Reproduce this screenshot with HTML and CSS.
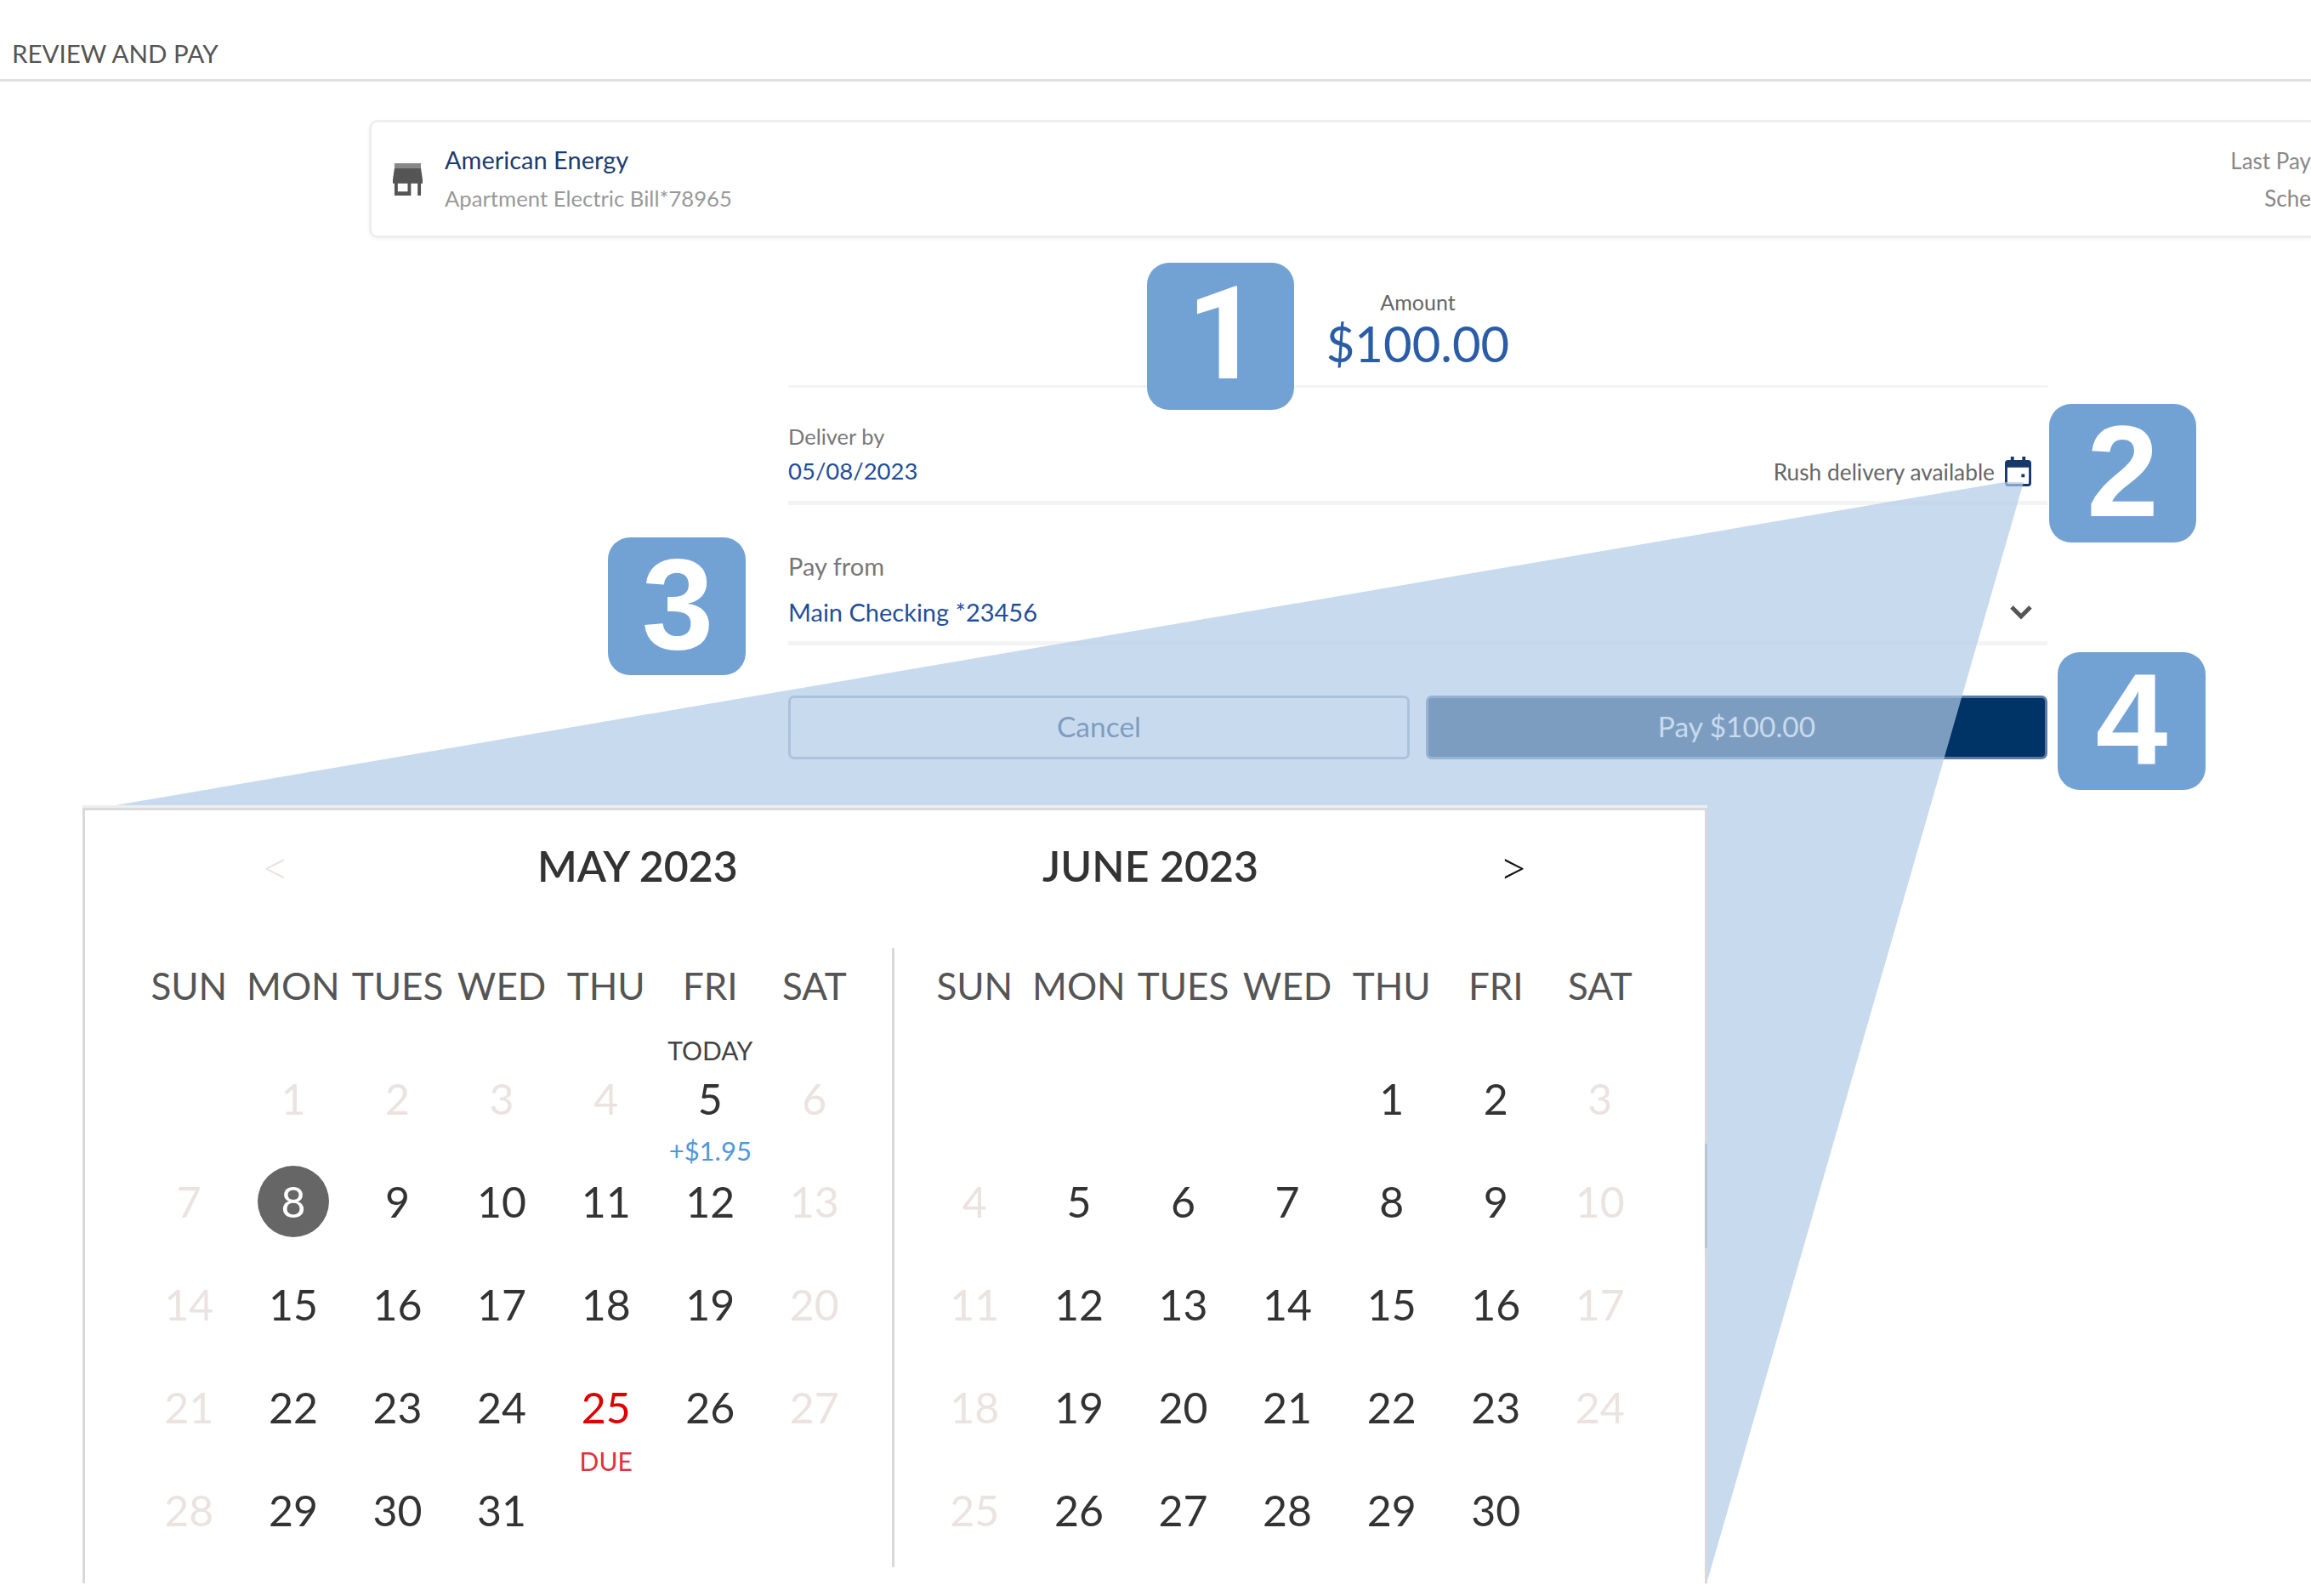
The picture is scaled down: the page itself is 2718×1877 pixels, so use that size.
FILE: index.html
```html
<!DOCTYPE html>
<html lang="en">
<head>
    <meta charset="UTF-8">
    <title>Review and Pay</title>
    <link rel="stylesheet" href="styles.css">
</head>
<body>
    <div class="page">
        <div class="page-header">REVIEW AND PAY</div>

        <div class="payee-card">
            <svg class="store-icon" viewBox="3 4 18 16" preserveAspectRatio="none">
                <path class="store-top" d="M20 4H4v2.5h16z"/>
                <path d="M21 14v-2l-1-5.500H4l-1 5.500v2h1v6h10v-6h4v6h2v-6zm-9 4H6v-4h6z"/>
            </svg>
            <div class="payee-info">
                <div class="payee-name">American Energy</div>
                <div class="payee-sub">Apartment Electric Bill*78965</div>
            </div>
            <div class="payee-last">
                <div>Last Pay</div>
                <div>Sche</div>
            </div>
        </div>

        <div class="form">
            <div class="amount">
                <div class="amount-label">Amount</div>
                <div class="amount-value">$100.00</div>
            </div>

            <div class="field field-date">
                <div>
                    <div class="field-label">Deliver by</div>
                    <div class="field-value">05/08/2023</div>
                </div>
                <div class="rush">
                    <span>Rush delivery available</span>
                    <svg class="cal-icon" viewBox="0 0 32 36"><path d="M7 0h4v4h10V0h4v4h3a4 4 0 0 1 4 4v24a4 4 0 0 1-4 4H4a4 4 0 0 1-4-4V8a4 4 0 0 1 4-4h3zM3 13v19a1 1 0 0 0 1 1h24a1 1 0 0 0 1-1V13zM20 21h4v4h-4z" fill-rule="evenodd"/></svg>
                </div>
            </div>

            <div class="field field-from">
                <div class="field-label">Pay from</div>
                <div class="field-row">
                    <div class="field-value">Main Checking *23456</div>
                    <svg class="chevron" viewBox="0 0 26 18"><path d="M2 3l11 11L24 3" fill="none" stroke="#555" stroke-width="5"/></svg>
                </div>
            </div>

            <div class="buttons">
                <button class="btn btn-cancel" type="button">Cancel</button>
                <button class="btn btn-pay" type="button">Pay $100.00</button>
            </div>
        </div>
    </div>

    <!-- callout wedge from the calendar icon down to the enlarged calendar -->
    <svg class="wedge" viewBox="0 0 2718 1877"><polygon points="2358,567 2380,567 2007,1863 136,947"/></svg>

    <div class="calendar">
        <div class="cal-titles">
            <span class="cal-arrow cal-arrow-off">&lt;</span>
            <span class="cal-title cal-title-may">MAY 2023</span>
            <span class="cal-title cal-title-june">JUNE 2023</span>
            <span class="cal-arrow cal-arrow-next">&gt;</span>
        </div>
        <div class="cal-months">
            <div class="month month-may" id="may"></div>
            <div class="month month-june" id="june"></div>
        </div>
    </div>

    <div class="badge badge-1">1</div>
    <div class="badge badge-2">2</div>
    <div class="badge badge-3">3</div>
    <div class="badge badge-4">4</div>

    <script src="calendar.js"></script>
</body>
</html>
```

FILE: styles.css
```css
* {
    margin: 0;
    padding: 0;
    box-sizing: border-box;
}

html, body {
    width: 2718px;
    height: 1877px;
    overflow: hidden;
    background: white;
}

body {
    position: relative;
    font-family: "Lato", sans-serif;
    color: #333;
}

.page-header {
    height: 96px;
    padding: 47px 0 0 14px;
    font-size: 29.500px;
    line-height: 32px;
    color: #555;
    border-bottom: 3px solid #e0e0e0;
}

.payee-card {
    display: flex;
    align-items: center;
    height: 139px;
    margin: 45px 0 0 434px;
    padding: 0 0 0 25px;
    border: 3px solid #eeeeee;
    border-right: none;
    border-radius: 10px 0 0 10px;
    box-shadow: 0 2px 4px rgba(0, 0, 0, 0.04);
}

.store-icon {
    width: 35px;
    height: 38px;
    fill: #555;
}

.store-top {
    fill: #888;
}

.payee-info {
    margin-left: 26px;
}

.payee-name {
    font-size: 29px;
    line-height: 34px;
    margin-top: -2px;
    color: #1d3c6e;
}

.payee-sub {
    margin-top: 13px;
    font-size: 25.700px;
    line-height: 30px;
    color: #999;
}

.payee-last {
    margin-left: auto;
    margin-top: 1px;
    text-align: right;
    font-size: 26px;
    line-height: 44px;
    color: #888;
    white-space: nowrap;
}

.form {
    width: 1481px;
    margin: 53px 0 0 927px;
}

.amount {
    height: 123px;
    padding-top: 8px;
    text-align: center;
    border-bottom: 3px solid #f3f3f3;
}

.amount-label {
    font-size: 25px;
    line-height: 28px;
    color: #666;
}

.amount-value {
    margin-top: 4px;
    font-size: 58px;
    line-height: 62px;
    color: #2a5ca8;
}

.field-label {
    font-size: 25.500px;
    line-height: 30px;
    color: #777;
}

.field-value {
    font-size: 27.500px;
    line-height: 36px;
    color: #1f4f9c;
}

.field-date {
    display: flex;
    justify-content: space-between;
    align-items: flex-end;
    height: 138px;
    padding: 40px 19px 17px 0;
    border-bottom: 5px solid #f3f3f3;
}

.field-date .field-label {
    margin-bottom: 8px;
}

.rush {
    display: flex;
    align-items: flex-end;
    gap: 12px;
    font-size: 26.300px;
    line-height: 30px;
    color: #666;
}

.rush span {
    margin-bottom: 2px;
}

.cal-icon {
    width: 31px;
    height: 35px;
    fill: #16386b;
}

.field-from {
    height: 165px;
    padding-top: 57px;
    border-bottom: 5px solid #f3f3f3;
}

.field-from .field-label {
    font-size: 29px;
}

.field-from .field-value {
    font-size: 29px;
}

.field-row {
    display: flex;
    justify-content: space-between;
    align-items: center;
    margin-top: 21px;
    padding-right: 18px;
}

.chevron {
    width: 26px;
    height: 18px;
}

.buttons {
    display: flex;
    justify-content: space-between;
    margin-top: 59px;
}

.btn {
    height: 75px;
    padding-bottom: 3px;
    font-family: "Lato", sans-serif;
    font-size: 33.500px;
    border-radius: 7px;
}

.btn-cancel {
    width: 731px;
    background: white;
    border: 3px solid #9fb0c4;
    color: #003366;
}

.btn-pay {
    width: 731px;
    background: #003366;
    border: 3px solid #5b7ba6;
    color: white;
}

.wedge {
    position: absolute;
    left: 0;
    top: 0;
    width: 2718px;
    height: 1877px;
}

.wedge polygon {
    fill: rgba(176, 202, 231, 0.7);
}

.calendar {
    position: absolute;
    left: 97px;
    top: 950px;
    width: 1911px;
    height: 912px;
    background: white;
    border: 3px solid #d9d9d9;
    border-bottom: none;
    box-shadow: 0 -3px 0 #eeeeee;
}

/* darker stretch of the right border, it is in the screenshot */
.calendar::after {
    content: "";
    position: absolute;
    right: -3px;
    top: 392px;
    width: 3px;
    height: 123px;
    background: #b9c6d4;
}

.cal-titles {
    position: relative;
    height: 162px;
}

.cal-title {
    position: absolute;
    top: 35px;
    font-size: 50px;
    line-height: 60px;
    font-weight: 600;
    color: #333;
    white-space: nowrap;
}

.cal-title-may {
    left: 532px;
}

.cal-title-june {
    left: 1126px;
}

.cal-arrow {
    position: absolute;
    top: 36px;
    font-size: 58px;
    font-weight: 300;
    line-height: 60px;
    color: #111;
}

.cal-arrow-off {
    left: 207px;
    color: #ebe3e0;
}

.cal-arrow-next {
    left: 1663px;
}

.cal-months {
    display: flex;
    padding-left: 61px;
}

.month {
    display: grid;
    grid-template-columns: repeat(7, 122.600px);
    grid-template-rows: 116px;
    grid-auto-rows: 121px;
    align-content: start;
    height: 728px;
}

.month-may {
    padding-right: 33px;
    width: 891px;
    border-right: 3px solid #d9d9d9;
}

.month-june {
    margin-left: 33px;
}

.weekday {
    padding-top: 19px;
    font-size: 44px;
    text-align: center;
    line-height: 50px;
    color: #555;
    white-space: nowrap;
}

.day {
    position: relative;
    display: flex;
    justify-content: center;
    align-items: center;
    font-size: 50px;
    color: #333;
}

.day-off {
    color: #ebe3e0;
}

.day-due {
    color: #e00000;
}

.day-picked span {
    display: flex;
    justify-content: center;
    align-items: center;
    width: 84px;
    height: 84px;
    border-radius: 50%;
    background: #666;
    color: white;
}

.day-note {
    position: absolute;
    left: 0;
    right: 0;
    text-align: center;
    font-size: 30px;
    line-height: 36px;
}

.note-top {
    top: -14px;
    color: #444;
}

.note-fee {
    bottom: -19px;
    font-size: 31px;
    color: #4f97dc;
}

.note-due {
    bottom: -21px;
    color: #e03040;
}

.badge {
    position: absolute;
    display: flex;
    justify-content: center;
    align-items: center;
    padding-bottom: 6px;
    background: #72a2d4;
    border-radius: 26px;
    color: white;
    font-family: "Liberation Sans", sans-serif;
    font-weight: bold;
    font-size: 152px;
    line-height: 1;
}

.badge-1 { left: 1349px; top: 309px; width: 173px; height: 173px; padding-left: 7px; font-family: "Roboto", sans-serif; }
.badge-2 { left: 2410px; top: 475px; width: 173px; height: 163px; }
.badge-3 { left: 715px; top: 632px; width: 162px; height: 162px; padding-left: 2px; }
.badge-4 { left: 2420px; top: 767px; width: 174px; height: 162px; }
```

FILE: calendar.js
```js
var NAMES = ['SUN', 'MON', 'TUES', 'WED', 'THU', 'FRI', 'SAT'];

// first = weekday of the 1st, open = days that can be picked
function buildMonth(id, first, total, open) {
    var box = document.getElementById(id);
    NAMES.forEach(function (name) {
        var cell = document.createElement('div');
        cell.className = 'weekday';
        cell.textContent = name;
        box.appendChild(cell);
    });
    for (var i = 0; i < first; i++) {
        box.appendChild(document.createElement('div'));
    }
    for (var d = 1; d <= total; d++) {
        var day = document.createElement('div');
        day.className = 'day';
        var weekday = (first + d - 1) % 7;
        if (weekday === 0 || weekday === 6 || !open(d)) {
            day.className += ' day-off';
        }
        day.innerHTML = '<span>' + d + '</span>';
        box.appendChild(day);
        day.id = id + '-' + d;
    }
}

function addNote(id, cls, text) {
    var note = document.createElement('div');
    note.className = 'day-note ' + cls;
    note.textContent = text;
    document.getElementById(id).appendChild(note);
}

buildMonth('may', 1, 31, function (d) { return d >= 5; });
buildMonth('june', 4, 30, function () { return true; });

document.getElementById('may-8').className += ' day-picked';
document.getElementById('may-25').className += ' day-due';
addNote('may-5', 'note-top', 'TODAY');
addNote('may-5', 'note-fee', '+$1.95');
addNote('may-25', 'note-due', 'DUE');
```
